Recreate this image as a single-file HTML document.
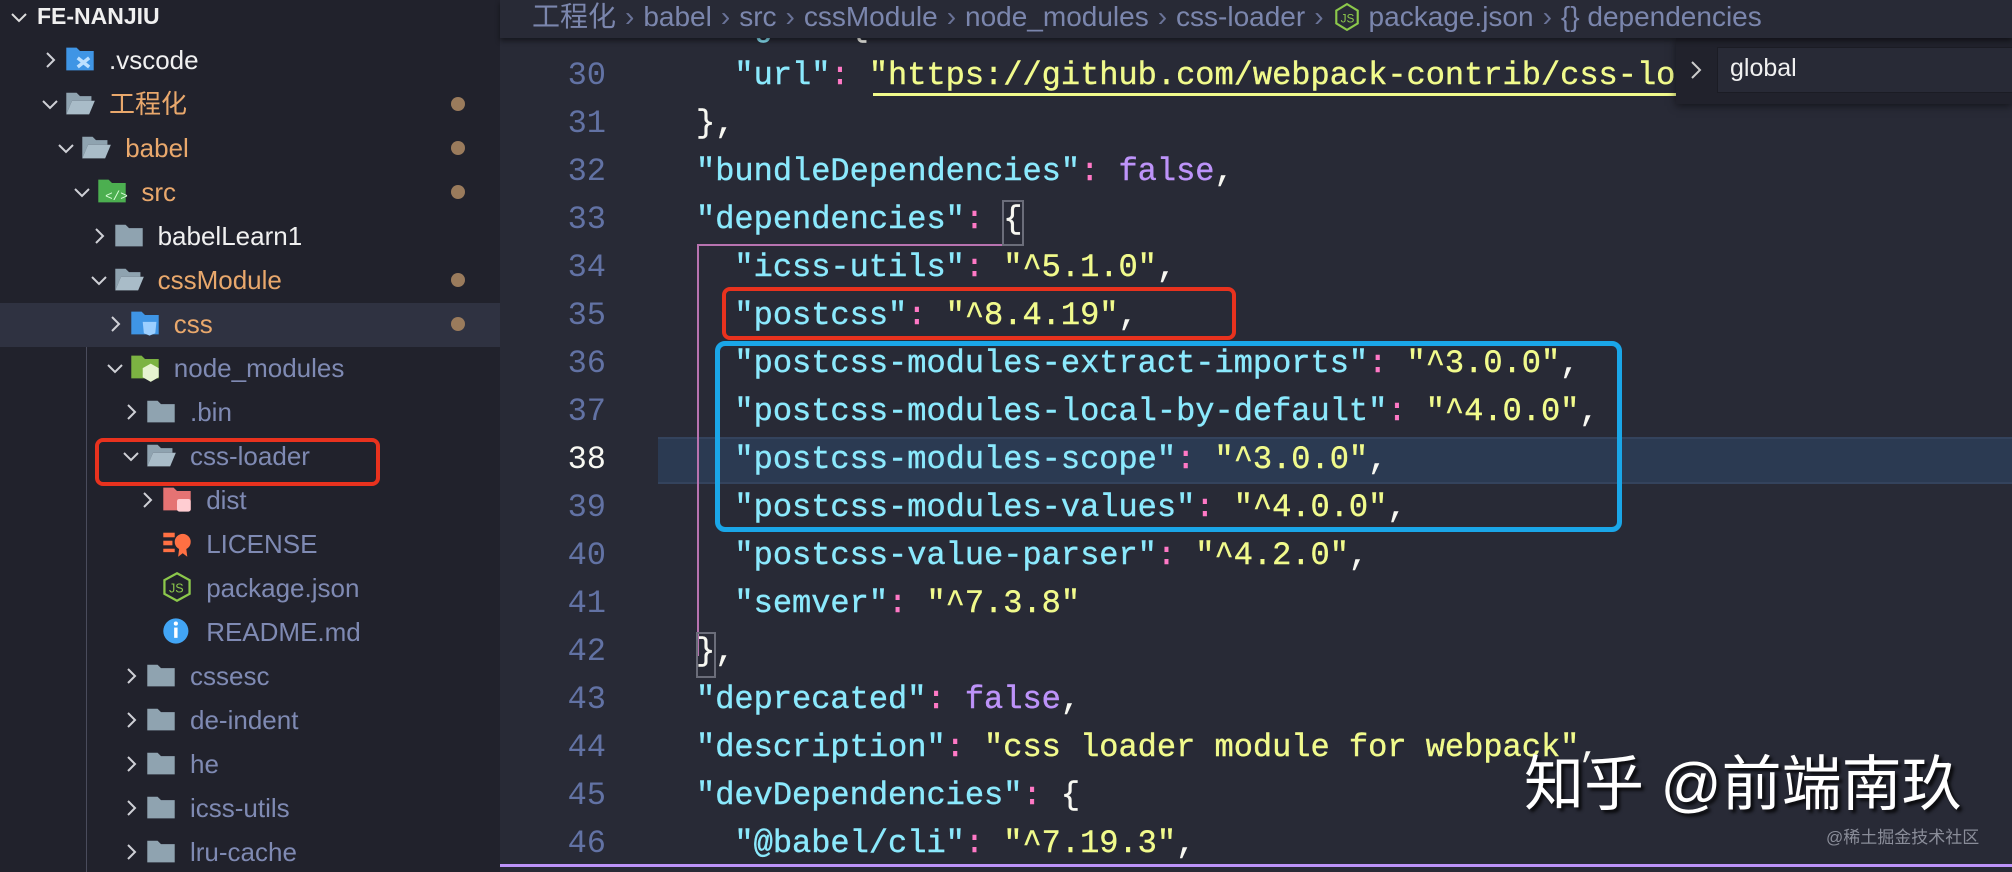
<!DOCTYPE html>
<html><head><meta charset="utf-8">
<style>
*{margin:0;padding:0;box-sizing:border-box}
body{width:2012px;height:872px;overflow:hidden;background:#282a36;position:relative;font-family:"Liberation Sans","Noto Sans CJK SC",sans-serif}
#side{position:absolute;left:0;top:0;width:500px;height:872px;background:#21222c;overflow:hidden}
.row{position:absolute;left:0;width:500px;height:44px}
.row .t{position:absolute;top:6px;font-size:26px;line-height:32px;white-space:nowrap}
.row .ch{position:absolute;top:10px;width:24px;height:24px}
.row .ic{position:absolute;top:6px;width:32px;height:30px}
.dot{position:absolute;left:451px;top:15px;width:14px;height:14px;border-radius:50%;background:#9a7b5c}
.o{color:#e9a86c}.w{color:#f0f0f0}.m{color:#7f8ab3}
#ed{position:absolute;left:500px;top:0;width:1512px;height:872px}
.ln{position:absolute;left:0;width:106px;text-align:right;font-family:"Liberation Mono",monospace;font-size:32px;line-height:48px;color:#6272a4}
.cl{position:absolute;left:196px;font-family:"Liberation Mono",monospace;font-size:32px;line-height:48px;white-space:pre;color:#f8f8f2;-webkit-text-stroke:0.4px currentColor}
.k{color:#8be9fd}.s{color:#f1fa8c}.p{color:#ff79c6}.b{color:#bd93f9}
#bc{position:absolute;left:0;top:0;width:1512px;height:38px;background:#282a36;box-shadow:0 3px 5px rgba(0,0,0,.45);font-size:28px;line-height:34px;color:#7b86ad;padding-left:32px;white-space:nowrap;z-index:3}
#bc .sep{color:#6a7398;margin:0 9px}
</style></head><body>
<div id="side">
  <div style="position:absolute;left:0;top:0;width:500px;height:36px">
    <svg style="position:absolute;left:8px;top:6px" width="22" height="22" viewBox="0 0 22 22"><path d="M4 8l7 7 7-7" stroke="#ddd" stroke-width="2" fill="none"/></svg>
    <span style="position:absolute;left:37px;top:1px;font-size:23px;font-weight:bold;color:#f0f0f0;line-height:30px">FE-NANJIU</span>
  </div>
  <div style="position:absolute;left:86px;top:303px;width:1px;height:569px;background:#4a4c5c"></div>
  <div style="position:absolute;left:0;top:303px;width:500px;height:44px;background:#2f3241"></div>
  <div id="rows"></div>
  <div style="position:absolute;left:95px;top:438px;width:285px;height:48px;border:4px solid #e8321e;border-radius:8px"></div>
</div>

<div id="ed">
  <div id="bc">工程化<span class="sep">›</span>babel<span class="sep">›</span>src<span class="sep">›</span>cssModule<span class="sep">›</span>node_modules<span class="sep">›</span>css-loader<span class="sep">›</span><svg width="28" height="30" viewBox="0 0 26 28" style="vertical-align:-6px;margin-right:8px"><path d="M13 2l10 6v12l-10 6-10-6V8z" fill="none" stroke="#8cc84b" stroke-width="2"/><text x="7" y="19" font-size="11" fill="#8cc84b" font-family="Liberation Sans">JS</text></svg>package.json<span class="sep">›</span>{} dependencies</div>
  <div style="position:absolute;left:158px;top:437px;width:1354px;height:47px;background:#2b3a52;border-top:2px solid #34435d;border-bottom:2px solid #34435d"></div>
  <div id="code"></div>
  <div style="position:absolute;left:197px;top:244px;width:2px;height:412px;background:#b873b0"></div>
  <div style="position:absolute;left:197px;top:244px;width:306px;height:2px;background:#b873b0"></div>
  <div style="position:absolute;left:502px;top:200px;width:22px;height:46px;border:2px solid #6b6d7a"></div>
  <div style="position:absolute;left:196px;top:632px;width:20px;height:46px;border:2px solid #6b6d7a"></div>
  <div style="position:absolute;left:373px;top:93px;width:804px;height:3px;background:#f1fa8c"></div>
  <div style="position:absolute;left:1176px;top:38px;width:336px;height:66px;background:#21222c;box-shadow:0 2px 8px rgba(0,0,0,.5);z-index:2">
    <svg style="position:absolute;left:12px;top:20px" width="16" height="24" viewBox="0 0 16 24"><path d="M4 4l8 8-8 8" stroke="#ccc" stroke-width="2" fill="none"/></svg>
    <div style="position:absolute;left:41px;top:9px;width:300px;height:46px;background:#282a36;border:1px solid #1b1c24"></div>
    <span style="position:absolute;left:54px;top:14px;font-size:25px;color:#f0f0f0;line-height:32px">global</span>
  </div>
  <div style="position:absolute;left:222px;top:287px;width:514px;height:53px;border:4px solid #e8321e;border-radius:8px"></div>
  <div style="position:absolute;left:215px;top:341px;width:907px;height:191px;border:5px solid #1aa6e8;border-radius:10px"></div>
  <div style="position:absolute;left:0;top:864px;width:1512px;height:3px;background:#bd93f9"></div>
  <div style="position:absolute;left:1024px;top:750px;font-size:60px;line-height:70px;color:#fff;text-shadow:3px 3px 3px rgba(0,0,0,.8);white-space:nowrap;font-family:'Liberation Sans','Noto Sans CJK SC',sans-serif">知乎 @前端南玖</div>
  <div style="position:absolute;left:1326px;top:826px;font-size:17px;line-height:24px;color:#8a8d99;white-space:nowrap">@稀土掘金技术社区</div>
</div>

<script>
var ch='<svg class="ch" viewBox="0 0 24 24"><path d="M9 5l7 7-7 7" stroke="#cfd0d6" stroke-width="2" fill="none"/></svg>';
var cd='<svg class="ch" viewBox="0 0 24 24"><path d="M5 9l7 7 7-7" stroke="#cfd0d6" stroke-width="2" fill="none"/></svg>';
function ic(t){
 if(t=='fo')return '<svg class="ic" viewBox="0 0 28 26"><path d="M2 4h9l3 3h10v4H7l-5 12z" fill="#8fa3b0"/><path d="M7 11h20l-5 12H2z" fill="#a9bcc8"/></svg>';
 if(t=='fc')return '<svg class="ic" viewBox="0 0 28 26"><path d="M2 4h9l3 3h12v16H2z" fill="#8fa3b0"/></svg>';
 if(t=='vs')return '<svg class="ic" viewBox="0 0 28 26"><path d="M2 3h9l3 3h12v17H2z" fill="#3f95e5"/><path d="M12 12l10 8M22 12l-10 8" stroke="#bde0ff" stroke-width="3"/></svg>';
 if(t=='src')return '<svg class="ic" viewBox="0 0 28 26"><path d="M2 3h9l3 3h12v17H2z" fill="#4caf50"/><text x="8" y="21" font-size="11" fill="#d8ffd8" font-family="Liberation Mono">&lt;/&gt;</text></svg>';
 if(t=='css')return '<svg class="ic" viewBox="0 0 28 26"><path d="M2 3h9l3 3h12v17H2z" fill="#3f95e5"/><path d="M12 12h12l-1 10-5 2-5-2z" fill="#9ccfff"/></svg>';
 if(t=='nm')return '<svg class="ic" viewBox="0 0 28 26"><path d="M2 3h9l3 3h12v17H2z" fill="#7cb342"/><path d="M19 10l7 4v8l-7 4-7-4v-8z" fill="#e6f3d0"/></svg>';
 if(t=='dist')return '<svg class="ic" viewBox="0 0 28 26"><path d="M2 3h9l3 3h12v17H2z" fill="#e57373"/><rect x="14" y="13" width="12" height="11" rx="2" fill="#ffcdd2"/></svg>';
 if(t=='lic')return '<svg class="ic" viewBox="0 0 28 26"><rect x="2" y="4" width="10" height="4" fill="#ff7043"/><rect x="2" y="11" width="8" height="4" fill="#ff7043"/><rect x="2" y="18" width="10" height="3" fill="#ff7043"/><circle cx="19" cy="12" r="7" fill="#ff7043"/><path d="M16 17l-1 8 4-3 4 3-1-8" fill="#ff7043"/></svg>';
 if(t=='js')return '<svg class="ic" viewBox="0 0 28 26"><path d="M14 1l11 6v12l-11 6-11-6V7z" fill="none" stroke="#8cc84b" stroke-width="2"/><text x="7" y="18" font-size="11" fill="#8cc84b" font-family="Liberation Sans">JS</text></svg>';
 if(t=='md')return '<svg class="ic" viewBox="0 0 28 26"><circle cx="13" cy="13" r="11" fill="#42a5f5"/><rect x="11.5" y="10" width="3" height="9" fill="#fff"/><circle cx="13" cy="6.5" r="1.8" fill="#fff"/></svg>';
}
var R=[[0,'c','vs','.vscode','w',0],[0,'d','fo','工程化','o',1],[1,'d','fo','babel','o',1],[2,'d','src','src','o',1],[3,'c','fc','babelLearn1','w',0],[3,'d','fo','cssModule','o',1],[4,'c','css','css','o',1],[4,'d','nm','node_modules','m',0],[5,'c','fc','.bin','m',0],[5,'d','fo','css-loader','m',0],[6,'c','dist','dist','m',0],[6,'','lic','LICENSE','m',0],[6,'','js','package.json','m',0],[6,'','md','README.md','m',0],[5,'c','fc','cssesc','m',0],[5,'c','fc','de-indent','m',0],[5,'c','fc','he','m',0],[5,'c','fc','icss-utils','m',0],[5,'c','fc','lru-cache','m',0]];
var h='';
R.forEach(function(r,i){
 var x=42+16.2*r[0];
 var c=r[1]=='c'?ch:r[1]=='d'?cd:'';
 h+='<div class="row" style="top:'+(38+i*44)+'px">'+(c?c.replace('class="ch"','class="ch" style="left:'+(x-4)+'px"'):'')+ic(r[2]).replace('class="ic"','class="ic" style="left:'+(x+22)+'px"')+'<span class="t '+r[4]+'" style="left:'+(x+67)+'px">'+r[3]+'</span>'+(r[5]?'<div class="dot"></div>':'')+'</div>';
});
document.getElementById('rows').innerHTML=h;
function K(s){return '<span class="k">"'+s+'"</span><span class="p">:</span> '}
function S(s){return '<span class="s">"'+s+'"</span>'}
var L=[[29,'<span class="k">"bugs"</span><span class="p">:</span> {'],
[30,'  '+K('url')+'<span class="s">"https://github.com/webpack-contrib/css-loader/issues"</span>'],
[31,'},'],[32,K('bundleDependencies')+'<span class="b">false</span>,'],[33,K('dependencies')+'{'],
[34,'  '+K('icss-utils')+S('^5.1.0')+','],[35,'  '+K('postcss')+S('^8.4.19')+','],
[36,'  '+K('postcss-modules-extract-imports')+S('^3.0.0')+','],
[37,'  '+K('postcss-modules-local-by-default')+S('^4.0.0')+','],
[38,'  '+K('postcss-modules-scope')+S('^3.0.0')+','],
[39,'  '+K('postcss-modules-values')+S('^4.0.0')+','],
[40,'  '+K('postcss-value-parser')+S('^4.2.0')+','],
[41,'  '+K('semver')+S('^7.3.8')],[42,'},'],[43,K('deprecated')+'<span class="b">false</span>,'],
[44,K('description')+S('css loader module for webpack')+','],[45,K('devDependencies')+'{'],
[46,'  '+K('@babel/cli')+S('^7.19.3')+',']];
var c='';
L.forEach(function(l){var t=52+(l[0]-30)*48;
 c+='<div class="ln" style="top:'+t+'px'+(l[0]==38?';color:#f8f8f2':'')+'">'+l[0]+'</div><div class="cl" style="top:'+t+'px">'+l[1]+'</div>';});
document.getElementById('code').innerHTML=c;
</script>
</body></html>
